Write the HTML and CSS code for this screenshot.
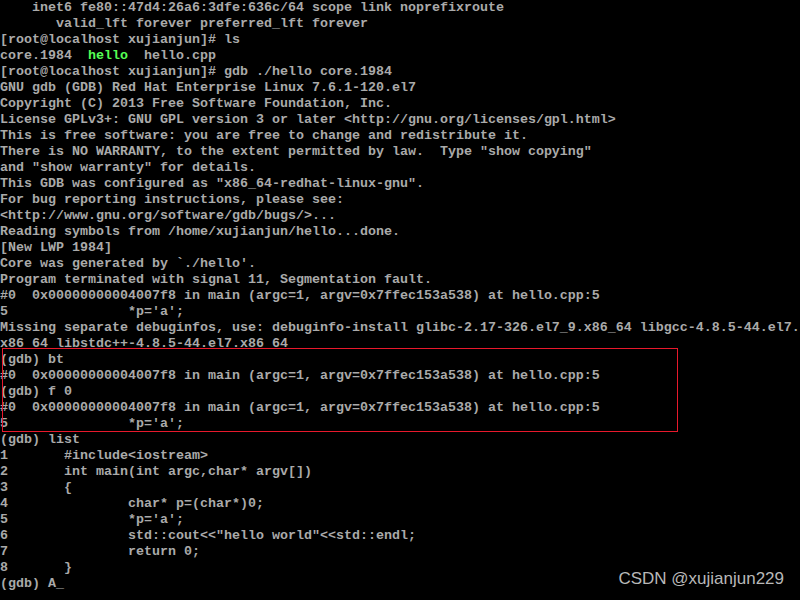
FILE: index.html
```html
<!DOCTYPE html>
<html>
<head>
<meta charset="utf-8">
<link rel="stylesheet" href="styles.css">
</head>
<body>
<div class="screen">
<pre class="console">    inet6 fe80::47d4:26a6:3dfe:636c/64 scope link noprefixroute
       valid_lft forever preferred_lft forever
[root@localhost xujianjun]# ls
core.1984  <span class="exe">hello</span>  hello.cpp
[root@localhost xujianjun]# gdb ./hello core.1984
GNU gdb (GDB) Red Hat Enterprise Linux 7.6.1-120.el7
Copyright (C) 2013 Free Software Foundation, Inc.
License GPLv3+: GNU GPL version 3 or later &lt;http://gnu.org/licenses/gpl.html&gt;
This is free software: you are free to change and redistribute it.
There is NO WARRANTY, to the extent permitted by law.  Type "show copying"
and "show warranty" for details.
This GDB was configured as "x86_64-redhat-linux-gnu".
For bug reporting instructions, please see:
&lt;http://www.gnu.org/software/gdb/bugs/&gt;...
Reading symbols from /home/xujianjun/hello...done.
[New LWP 1984]
Core was generated by `./hello'.
Program terminated with signal 11, Segmentation fault.
#0  0x00000000004007f8 in main (argc=1, argv=0x7ffec153a538) at hello.cpp:5
5		*p='a';
Missing separate debuginfos, use: debuginfo-install glibc-2.17-326.el7_9.x86_64 libgcc-4.8.5-44.el7.
x86_64 libstdc++-4.8.5-44.el7.x86_64
(gdb) bt
#0  0x00000000004007f8 in main (argc=1, argv=0x7ffec153a538) at hello.cpp:5
(gdb) f 0
#0  0x00000000004007f8 in main (argc=1, argv=0x7ffec153a538) at hello.cpp:5
5		*p='a';
(gdb) list
1	#include&lt;iostream&gt;
2	int main(int argc,char* argv[])
3	{
4		char* p=(char*)0;
5		*p='a';
6		std::cout&lt;&lt;"hello world"&lt;&lt;std::endl;
7		return 0;
8	}
(gdb) A_</pre>
<div class="highlight"></div>
<div class="watermark">CSDN @xujianjun229</div>
</div>
</body>
</html>
```
FILE: styles.css
```css
html, body {
  margin: 0;
  padding: 0;
  background: #000;
}
.screen {
  position: relative;
  width: 800px;
  height: 600px;
  overflow: hidden;
  background: #000;
}
.console {
  margin: 0;
  padding: 0;
  font-family: "Liberation Mono", "DejaVu Sans Mono", monospace;
  font-size: 13.3333px;
  font-weight: bold;
  line-height: 16px;
  color: #aaaaaa;
  white-space: pre;
  tab-size: 8;
  -moz-tab-size: 8;
}
.exe {
  color: #55ff55;
}
.highlight {
  position: absolute;
  left: 2px;
  top: 348px;
  width: 674px;
  height: 82px;
  border: 1px solid #e8192c;
}
.watermark {
  position: absolute;
  right: 16px;
  bottom: 12px;
  font-family: "Liberation Sans", Arial, sans-serif;
  font-size: 17px;
  line-height: 18px;
  color: #b8b8b8;
}
```
